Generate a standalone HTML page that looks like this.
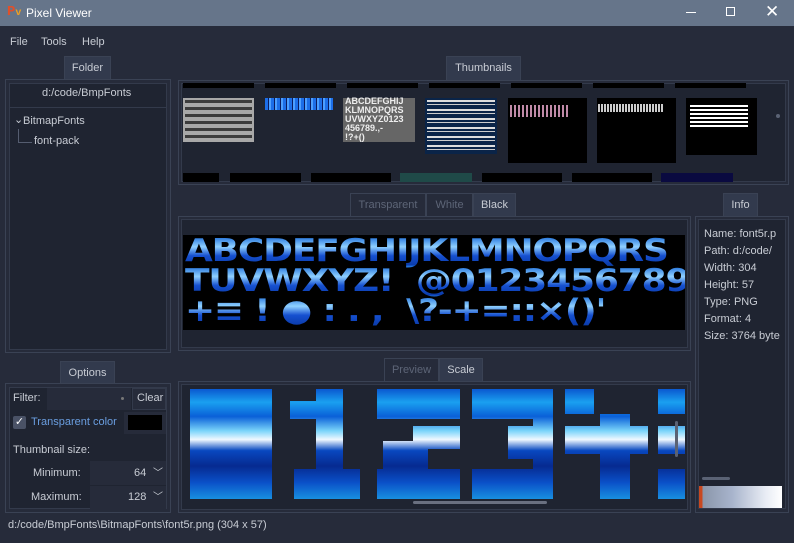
<!DOCTYPE html>
<html><head><meta charset="utf-8"><style>
*{margin:0;padding:0;box-sizing:border-box}
body{width:794px;height:543px;background:#262b3a;font-family:"Liberation Sans",sans-serif;font-size:11px;color:#c8ccd4;position:relative;overflow:hidden}
.a{position:absolute}
.title{left:0;top:0;width:794px;height:26px;background:#66758a;color:#fff}
.panel{position:absolute;border:1px solid #3a4254;background:#262b3a}
.tab{position:absolute;background:#323a4d;border:1px solid #3a4254;border-bottom:none;color:#c8ccd4;text-align:center;line-height:22px;font-size:11px}
.tab.off{background:#262b3a;color:#5d6577}
.inbox{position:absolute;background:#1f2431;border:1px solid #333a4b}
.blk{position:absolute;background:#000}
.t{position:absolute;white-space:nowrap}
</style></head><body>
<div class="a title">
 <div class="t" style="left:7px;top:4px;font-weight:bold;color:#e0502a;font-size:14px;font-family:'Liberation Mono',monospace">P<span style="font-size:10px;color:#f0a020">v</span></div>
 <div class="t" style="left:26px;top:6px;font-size:12px;color:#fff">Pixel Viewer</div>
 <div class="a" style="left:686px;top:12px;width:10px;height:1px;background:#fff"></div>
 <div class="a" style="left:726px;top:7px;width:9px;height:9px;border:1px solid #fff"></div>
 <div class="t" style="left:765px;top:2px;font-size:17px;color:#fff">✕</div>
</div>
<div class="t" style="left:10px;top:36px">File</div>
<div class="t" style="left:41px;top:36px">Tools</div>
<div class="t" style="left:82px;top:36px">Help</div>

<!-- Folder -->
<div class="tab" style="left:64px;top:56px;width:47px;height:24px">Folder</div>
<div class="panel" style="left:5px;top:79px;width:166px;height:274px"></div>
<div class="inbox" style="left:9px;top:83px;width:158px;height:267px"></div>
<div class="t" style="left:42px;top:87px">d:/code/BmpFonts</div>
<div class="a" style="left:10px;top:107px;width:156px;height:1px;background:#333a4b"></div>
<div class="t" style="left:14px;top:113px">⌄</div>
<div class="t" style="left:23px;top:115px">BitmapFonts</div>
<div class="a" style="left:18px;top:129px;width:1px;height:13px;background:#555d70"></div>
<div class="a" style="left:18px;top:142px;width:14px;height:1px;background:#555d70"></div>
<div class="t" style="left:34px;top:135px">font-pack</div>

<!-- Thumbnails -->
<div class="tab" style="left:446px;top:56px;width:75px;height:25px">Thumbnails</div>
<div class="panel" style="left:178px;top:80px;width:611px;height:105px"></div>
<div class="inbox" style="left:181px;top:83px;width:605px;height:99px"></div>
<div class="blk" style="left:183px;top:83px;width:71px;height:5px"></div>
<div class="blk" style="left:265px;top:83px;width:71px;height:5px"></div>
<div class="blk" style="left:347px;top:83px;width:71px;height:5px"></div>
<div class="blk" style="left:429px;top:83px;width:71px;height:5px"></div>
<div class="blk" style="left:511px;top:83px;width:71px;height:5px"></div>
<div class="blk" style="left:593px;top:83px;width:71px;height:5px"></div>
<div class="blk" style="left:675px;top:83px;width:71px;height:5px"></div>
<div class="a" style="left:183px;top:98px;width:71px;height:44px;background:#a8a8a8"></div>
<div class="a" style="left:185px;top:100px;width:67px;height:40px;background:repeating-linear-gradient(180deg,#222 0 3px,transparent 3px 7px),repeating-linear-gradient(90deg,transparent 0 3px,#a8a8a8 3px 6px);opacity:.8"></div>
<div class="a" style="left:265px;top:98px;width:68px;height:12px;background:repeating-linear-gradient(90deg,#1c6ee8 0 3px,#0a1c60 3px 4px,#4ea0ff 4px 6px)"></div>
<div class="a" style="left:343px;top:98px;width:72px;height:44px;background:#666"></div>
<div class="t" style="left:345px;top:97px;font-size:9px;font-weight:bold;color:#eee;line-height:9px">ABCDEFGHIJ<br>KLMNOPQRS<br>UVWXYZ0123<br>456789.,-<br>!?+()</div>
<div class="a" style="left:425px;top:98px;width:72px;height:56px;background:#0a2448"></div>
<div class="a" style="left:427px;top:100px;width:68px;height:50px;background:repeating-linear-gradient(180deg,#ddd 0 2px,#0a2448 2px 4px,#ccc 4px 5px,#0a2448 5px 9px)"></div>
<div class="blk" style="left:508px;top:98px;width:79px;height:65px"></div>
<div class="a" style="left:510px;top:105px;width:60px;height:12px;background:repeating-linear-gradient(90deg,#c08aa8 0 2px,#000 2px 4px)"></div>
<div class="blk" style="left:597px;top:98px;width:79px;height:65px"></div>
<div class="a" style="left:598px;top:104px;width:66px;height:8px;background:repeating-linear-gradient(90deg,#ccc 0 2px,#000 2px 3px)"></div>
<div class="blk" style="left:686px;top:98px;width:71px;height:57px"></div>
<div class="a" style="left:690px;top:105px;width:58px;height:22px;background:repeating-linear-gradient(180deg,#fff 0 2px,#000 2px 4px)"></div>
<div class="a" style="left:776px;top:114px;width:4px;height:4px;border-radius:2px;background:#5a6274"></div>
<div class="blk" style="left:183px;top:173px;width:36px;height:9px"></div>
<div class="blk" style="left:230px;top:173px;width:71px;height:9px"></div>
<div class="blk" style="left:311px;top:173px;width:80px;height:9px"></div>
<div class="a" style="left:400px;top:173px;width:72px;height:9px;background:#1f4a48"></div>
<div class="blk" style="left:482px;top:173px;width:80px;height:9px"></div>
<div class="blk" style="left:572px;top:173px;width:80px;height:9px"></div>
<div class="a" style="left:661px;top:173px;width:72px;height:9px;background:#0a0a40"></div>

<!-- BG tabs -->
<div class="tab off" style="left:350px;top:193px;width:76px;height:23px">Transparent</div>
<div class="tab off" style="left:426px;top:193px;width:47px;height:23px">White</div>
<div class="tab" style="left:473px;top:193px;width:43px;height:24px">Black</div>
<div class="panel" style="left:178px;top:216px;width:513px;height:135px"></div>
<div class="inbox" style="left:181px;top:219px;width:507px;height:129px"></div>
<div class="blk" style="left:183px;top:235px;width:502px;height:95px;overflow:hidden">
 <div class="t" style="left:2px;top:1px;transform:scaleX(1.16);transform-origin:0 0;font-family:'DejaVu Sans',sans-serif;font-weight:bold;font-size:31px;letter-spacing:-1px;line-height:30px;background:linear-gradient(180deg,#1a6ad8 0,#8fd0ff 12%,#1650d0 22%,#0a3aa8 33%,#1a6ad8 33%,#8fd0ff 45%,#1650d0 55%,#0a3aa8 66%,#1a6ad8 66%,#8fd0ff 78%,#1650d0 88%,#0a3aa8 100%);-webkit-background-clip:text;background-clip:text;color:transparent">ABCDEFGHIJKLMNOPQRS<br>TUVWXYZ!&nbsp;&nbsp;@0123456789<br>+≡&nbsp;!&nbsp;●&nbsp;:&nbsp;.&nbsp;,&nbsp;&nbsp;\?-+=::×()'</div>
</div>

<!-- Info -->
<div class="tab" style="left:723px;top:193px;width:35px;height:24px">Info</div>
<div class="panel" style="left:695px;top:216px;width:94px;height:297px"></div>
<div class="inbox" style="left:698px;top:219px;width:88px;height:290px"></div>
<div class="t" style="left:704px;top:226px;line-height:17px;font-size:11px">Name: font5r.p<br>Path: d:/code/<br>Width: 304<br>Height: 57<br>Type: PNG<br>Format: 4<br>Size: 3764 byte</div>
<div class="a" style="left:702px;top:477px;width:28px;height:3px;border-radius:2px;background:#5a6274"></div>
<div class="a" style="left:699px;top:486px;width:83px;height:22px;background:linear-gradient(90deg,#c84820 0 3px,#8a96aa 4px,#a8b4cc 40%,#e8ecf4 80%,#fff)"></div>

<!-- Preview/Scale -->
<div class="tab off" style="left:384px;top:358px;width:55px;height:23px">Preview</div>
<div class="tab" style="left:439px;top:358px;width:44px;height:24px">Scale</div>
<div class="panel" style="left:178px;top:381px;width:513px;height:132px"></div>
<div class="inbox" style="left:181px;top:384px;width:507px;height:126px"></div>
<svg class="a" style="left:178px;top:381px" width="512" height="132">
<defs><linearGradient id="g" gradientUnits="userSpaceOnUse" x1="0" y1="8" x2="0" y2="118"><stop offset="0" stop-color="#0a58d0"/><stop offset="0.12" stop-color="#1aa0f0"/><stop offset="0.25" stop-color="#0a60d8"/><stop offset="0.38" stop-color="#7ad4fa"/><stop offset="0.46" stop-color="#f0f8ff"/><stop offset="0.56" stop-color="#0848c0"/><stop offset="0.7" stop-color="#062a90"/><stop offset="0.85" stop-color="#0a50c8"/><stop offset="1" stop-color="#1890e0"/></linearGradient></defs>
<g fill="url(#g)">
<rect x="12" y="8" width="82" height="110"/>
<rect x="112" y="20" width="26" height="18"/><rect x="138" y="8" width="27" height="80"/><rect x="116" y="88" width="66" height="30"/>
<rect x="199" y="8" width="83" height="30"/><rect x="235" y="45" width="47" height="23"/><rect x="205" y="60" width="45" height="28"/><rect x="199" y="88" width="83" height="30"/>
<rect x="294" y="8" width="81" height="30"/><rect x="330" y="45" width="45" height="33"/><rect x="294" y="88" width="81" height="30"/><rect x="355" y="8" width="20" height="110"/>
<rect x="387" y="8" width="29" height="25"/><rect x="387" y="45" width="83" height="28"/><rect x="422" y="33" width="30" height="85"/>
<rect x="480" y="8" width="27" height="25"/><rect x="480" y="45" width="27" height="28"/><rect x="480" y="88" width="27" height="30"/>
</g>
<rect x="235" y="120" width="134" height="3" rx="1.5" fill="#6a7080"/>
<rect x="497" y="40" width="3" height="36" rx="1.5" fill="#5a6274"/>
</svg>

<!-- Options -->
<div class="tab" style="left:60px;top:361px;width:55px;height:23px">Options</div>
<div class="panel" style="left:5px;top:383px;width:166px;height:130px"></div>
<div class="inbox" style="left:9px;top:387px;width:158px;height:122px"></div>
<div class="t" style="left:13px;top:392px">Filter:</div>
<div class="a" style="left:47px;top:388px;width:84px;height:22px;background:#262b3a"></div>
<div class="a" style="left:121px;top:397px;width:3px;height:3px;border-radius:2px;background:#777"></div>
<div class="a" style="left:132px;top:388px;width:34px;height:22px;background:#262b3a;border:1px solid #333a4b"></div>
<div class="t" style="left:137px;top:392px">Clear</div>
<div class="a" style="left:13px;top:416px;width:13px;height:13px;background:#4a5266;border-radius:2px;color:#fff;font-size:11px;line-height:13px;text-align:center">✓</div>
<div class="t" style="left:31px;top:416px;color:#6a9ee0">Transparent color</div>
<div class="a" style="left:124px;top:412px;width:42px;height:22px;background:#262b3a"></div>
<div class="blk" style="left:128px;top:415px;width:34px;height:15px"></div>
<div class="t" style="left:13px;top:444px">Thumbnail size:</div>
<div class="a" style="left:90px;top:461px;width:76px;height:24px;background:#262b3a"></div>
<div class="t" style="left:33px;top:467px">Minimum:</div>
<div class="t" style="left:134px;top:467px">64</div>
<div class="t" style="left:153px;top:464px;font-size:10px">﹀</div>
<div class="a" style="left:90px;top:486px;width:76px;height:23px;background:#262b3a"></div>
<div class="t" style="left:31px;top:491px">Maximum:</div>
<div class="t" style="left:128px;top:491px">128</div>
<div class="t" style="left:153px;top:488px;font-size:10px">﹀</div>

<div class="t" style="left:8px;top:519px">d:/code/BmpFonts\BitmapFonts\font5r.png (304 x 57)</div>
</body></html>
